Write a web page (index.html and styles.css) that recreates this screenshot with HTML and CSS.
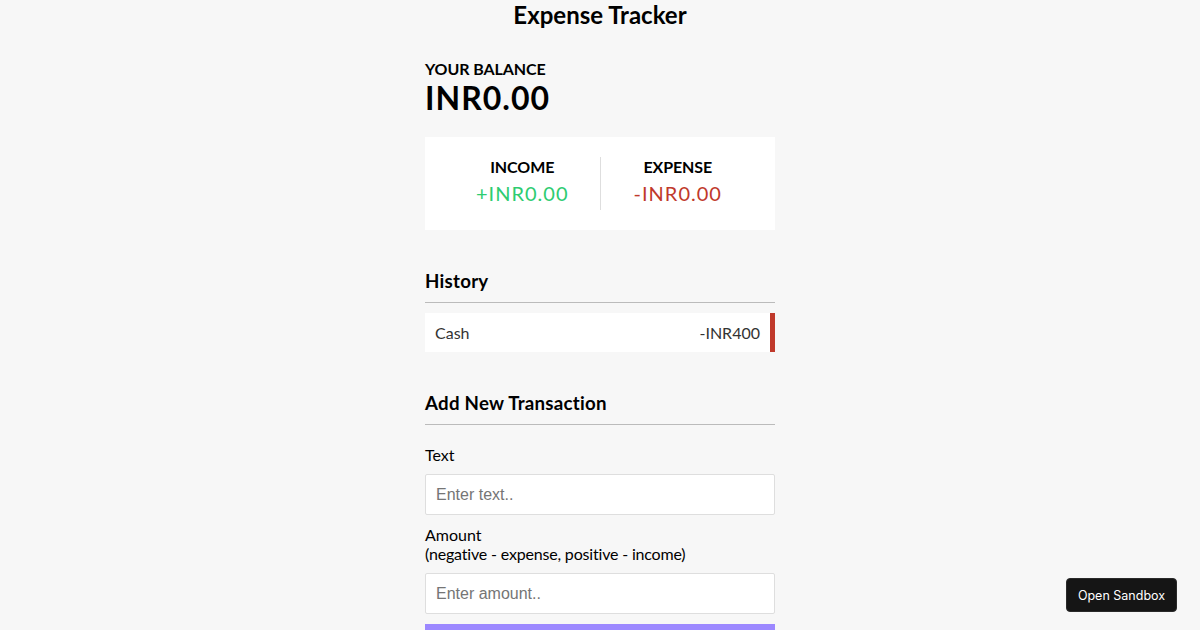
FILE: index.html
```html
<!DOCTYPE html>
<html lang="en">
<head>
<meta charset="UTF-8">
<title>Expense Tracker</title>
<link rel="stylesheet" href="styles.css">
</head>
<body>
  <h2 class="title">Expense Tracker</h2>
  <div class="container">
    <h4 class="label-upper">Your Balance</h4>
    <h1 class="balance">INR0.00</h1>

    <div class="inc-exp-container">
      <div class="inc-exp-col divided">
        <h4 class="label-upper">Income</h4>
        <p class="money plus">+INR0.00</p>
      </div>
      <div class="inc-exp-col">
        <h4 class="label-upper">Expense</h4>
        <p class="money minus">-INR0.00</p>
      </div>
    </div>

    <h3 class="section-title">History</h3>
    <ul class="list">
      <li class="list-item minus"><span>Cash</span><span>-INR400</span></li>
    </ul>

    <h3 class="section-title">Add New Transaction</h3>
    <form class="form">
      <div class="form-control">
        <label class="field-label" for="text">Text</label>
        <input class="field-input" type="text" id="text" placeholder="Enter text..">
      </div>
      <div class="form-control">
        <label class="field-label" for="amount">Amount <br><span class="hint">(negative - expense, positive - income)</span></label>
        <input class="field-input" type="number" id="amount" placeholder="Enter amount..">
      </div>
      <button class="btn" type="button">Add transaction</button>
    </form>
  </div>

  <button class="sandbox-btn" type="button">Open Sandbox</button>
</body>
</html>
```

FILE: styles.css
```css
* {
  box-sizing: border-box;
}

body {
  background-color: #f7f7f7;
  display: flex;
  flex-direction: column;
  align-items: center;
  margin: 0;
  font-family: "Lato", "Noto Sans", sans-serif;
  color: #000;
}

.title {
  margin: 0;
  font-size: 24px;
  font-weight: 700;
}

.container {
  margin: 30px auto;
  width: 350px;
}

.label-upper {
  margin: 0;
  font-size: 16px;
  font-weight: 700;
  text-transform: uppercase;
  letter-spacing: -0.1px;
}

.balance {
  margin: 0;
  font-size: 32px;
  font-weight: 700;
  letter-spacing: 1px;
}

.inc-exp-container {
  background-color: #fff;
  padding: 20px;
  display: flex;
  justify-content: space-between;
  margin: 20px 0;
}

.inc-exp-col {
  flex: 1;
  text-align: center;
}

.inc-exp-col.divided {
  border-right: 1px solid #dedede;
}

.money {
  font-size: 20px;
  letter-spacing: 1px;
  margin: 5px 0;
}

.money.plus {
  color: #2ecc71;
}

.money.minus {
  color: #c0392b;
}

.section-title {
  font-size: 18.72px;
  font-weight: 700;
  letter-spacing: 0.25px;
  border-bottom: 1px solid #bbb;
  padding-bottom: 10px;
  margin: 40px 0 10px;
}

.list {
  list-style-type: none;
  padding: 0;
  margin: 0 0 40px;
}

.list-item {
  background-color: #fff;
  color: #333;
  display: flex;
  justify-content: space-between;
  padding: 10px;
  margin: 10px 0;
}

.list-item.minus {
  border-right: 5px solid #c0392b;
}

.list-item.plus {
  border-right: 5px solid #2ecc71;
}

.form {
  margin: 0;
}

.field-label {
  display: inline-block;
  margin: 10px 0;
  font-size: 16px;
}

.hint {
  letter-spacing: -0.18px;
}

.field-input {
  border: 1px solid #dedede;
  border-radius: 2px;
  display: block;
  font-family: "Liberation Sans", Arial, sans-serif;
  font-size: 16px;
  line-height: 19px;
  height: 41px;
  padding: 10px;
  width: 100%;
  background: #fff;
  color: #000;
  -moz-appearance: textfield;
}

.field-input::-webkit-outer-spin-button,
.field-input::-webkit-inner-spin-button {
  -webkit-appearance: none;
  margin: 0;
}

.field-input::placeholder {
  color: #757575;
}

.btn {
  cursor: pointer;
  background-color: #9c88ff;
  color: #fff;
  border: 0;
  display: block;
  font-family: "Liberation Sans", Arial, sans-serif;
  font-size: 16px;
  margin: 10px 0 30px;
  padding: 10px;
  width: 100%;
}

.sandbox-btn {
  position: fixed;
  right: 23px;
  bottom: 18px;
  width: 111px;
  height: 34px;
  background: #151515;
  color: #fff;
  border: 1px solid #2a2a2a;
  border-radius: 4px;
  font-family: "Inter", "Roboto", sans-serif;
  font-size: 12.5px;
  padding: 0;
}
```
